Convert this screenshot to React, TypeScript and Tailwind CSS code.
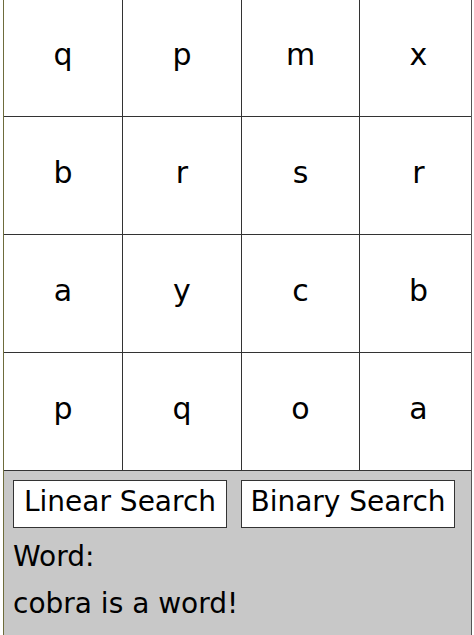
import React from 'react';

const letters = [
  ['q', 'p', 'm', 'x'],
  ['b', 'r', 's', 'r'],
  ['a', 'y', 'c', 'b'],
  ['p', 'q', 'o', 'a'],
];

export default function App() {
  return (
    <div className="w-[474px] h-[635px] bg-white overflow-hidden" style={{ fontFamily: '"DejaVu Sans", Verdana, sans-serif' }}>
      <div className="ml-[3px] w-[469px] h-full flex flex-col border-l border-l-[#6e6c3c] border-r border-r-[#555555] overflow-hidden">
        {/* Letter board */}
        <div className="grid grid-cols-[119px_119px_118px_118px] grid-rows-[117px_118px_118px_118px] w-[474px]">
          {letters.flat().map((ch, i) => (
            <div
              key={i}
              className="flex items-center justify-center pb-[6px] border-r border-b border-[#333333] bg-white text-[30px] leading-none text-black"
            >
              {ch}
            </div>
          ))}
        </div>

        {/* Controls */}
        <div className="flex-1 bg-[#c8c8c8] px-[9px] pt-[9px] text-black">
          <div className="flex gap-[14px]">
            <button className="w-[214px] h-[48px] pb-[5px] bg-white border border-[#333333] text-[28px] leading-none">
              Linear Search
            </button>
            <button className="w-[214px] h-[48px] pb-[5px] bg-white border border-[#333333] text-[28px] leading-none">
              Binary Search
            </button>
          </div>
          <div className="mt-[12px] text-[28px] leading-[34px]">Word:</div>
          <div className="mt-[13px] text-[28px] leading-[34px]">cobra is a word!</div>
        </div>
      </div>
    </div>
  );
}
